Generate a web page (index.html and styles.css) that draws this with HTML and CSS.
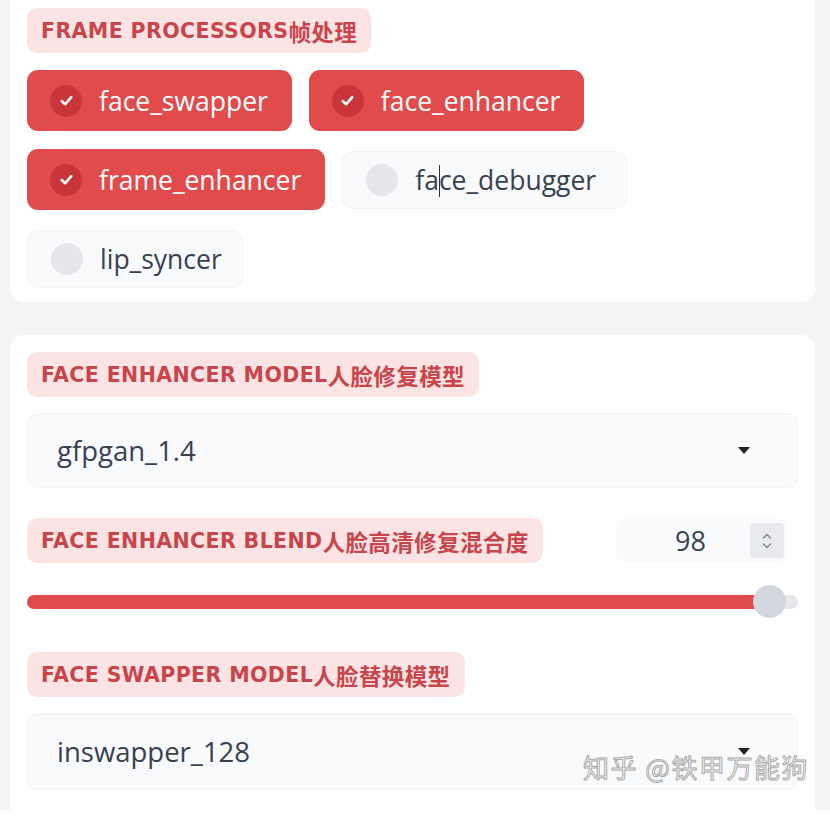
FILE: index.html
```html
<!DOCTYPE html>
<html>
<head>
<meta charset="utf-8">
<link rel="stylesheet" href="styles.css">
</head>
<body>
<div class="page">
  <section class="panel panel-top">
    <div class="label">FRAME PROCESSORS<span class="zh">帧处理</span></div>
    <div class="checks">
      <div class="chk on"><span class="dot"><svg viewBox="0 0 16 16" width="17" height="17"><path d="M3.5 8.5 L6.8 11.5 L12.5 4.8" fill="none" stroke="#fff" stroke-width="2.4" stroke-linecap="round" stroke-linejoin="round"/></svg></span><span class="txt">face_swapper</span></div>
      <div class="chk on"><span class="dot"><svg viewBox="0 0 16 16" width="17" height="17"><path d="M3.5 8.5 L6.8 11.5 L12.5 4.8" fill="none" stroke="#fff" stroke-width="2.4" stroke-linecap="round" stroke-linejoin="round"/></svg></span><span class="txt">face_enhancer</span></div>
      <div class="chk on"><span class="dot"><svg viewBox="0 0 16 16" width="17" height="17"><path d="M3.5 8.5 L6.8 11.5 L12.5 4.8" fill="none" stroke="#fff" stroke-width="2.4" stroke-linecap="round" stroke-linejoin="round"/></svg></span><span class="txt">frame_enhancer</span></div>
      <div class="chk off wide"><span class="dot"></span><span class="txt">fa<span class="caret-cursor"></span>ce_debugger</span></div>
      <div class="chk off"><span class="dot"></span><span class="txt">lip_syncer</span></div>
    </div>
  </section>
  <section class="panel panel-main">
    <div class="field">
      <div class="label">FACE ENHANCER MODEL<span class="zh">人脸修复模型</span></div>
      <div class="dropdown"><span>gfpgan_1.4</span><span class="tri"></span></div>
    </div>
    <div class="field blend">
      <div class="blend-head">
        <div class="label">FACE ENHANCER BLEND<span class="zh">人脸高清修复混合度</span></div>
        <div class="number"><span class="num">98</span><span class="spin"><svg viewBox="0 0 12 22" width="12" height="22"><path d="M2.5 8 L6 4.5 L9.5 8 M2.5 14 L6 17.5 L9.5 14" fill="none" stroke="#8a8f98" stroke-width="1.6" stroke-linecap="round" stroke-linejoin="round"/></svg></span></div>
      </div>
      <div class="slider"><div class="fill" style="width:96.2%"></div><div class="thumb"></div></div>
    </div>
    <div class="field swap">
      <div class="label">FACE SWAPPER MODEL<span class="zh">人脸替换模型</span></div>
      <div class="dropdown"><span>inswapper_128</span><span class="tri"></span></div>
    </div>
  </section>
  <div class="watermark">知乎 @铁甲万能狗</div>
</div>
</body>
</html>
```
FILE: styles.css
```css
html, body {
  margin: 0;
  padding: 0;
  background: #ffffff;
}
body {
  font-family: "Open Sans", "Noto Sans CJK SC", sans-serif;
  color: #374151;
}
.page {
  position: relative;
  height: 810px;
  background: #f3f4f6;
  padding: 0 15px 0 10px;
  display: flex;
  flex-direction: column;
  gap: 33px;
  overflow: hidden;
}
.panel {
  background: #ffffff;
}
.panel-top {
  border-radius: 0 0 14px 14px;
  padding: 8px 17px 15px;
  height: 279px;
}
.panel-main {
  border-radius: 14px 14px 0 0;
  padding: 17px 17px 0;
  flex: 1;
  display: flex;
  flex-direction: column;
}
.label {
  display: inline-flex;
  align-items: center;
  height: 45px;
  padding: 0 14px;
  background: #fde4e4;
  color: #c9444b;
  font-family: "DejaVu Sans", "Noto Sans CJK SC", sans-serif;
  font-weight: 700;
  font-size: 20.5px;
  letter-spacing: 0.4px;
  border-radius: 10px;
  align-self: flex-start;
  white-space: nowrap;
}
.label .zh {
  font-family: "Noto Sans CJK SC", sans-serif;
  font-size: 22.5px;
}
.checks {
  margin-top: 17px;
  display: flex;
  flex-wrap: wrap;
  gap: 18px 17px;
  width: 640px;
}
.chk {
  display: flex;
  align-items: center;
  height: 61px;
  box-sizing: border-box;
  padding: 0 24px 0 23px;
  border-radius: 11px;
  font-size: 26.5px;
  gap: 17px;
}
.chk .dot {
  width: 32px;
  height: 32px;
  border-radius: 50%;
  display: flex;
  align-items: center;
  justify-content: center;
  flex: none;
}
.chk.on {
  background: #e14b4b;
  color: #ffffff;
}
.chk.on .dot {
  background: #c8363b;
}
.chk.off {
  background: #f9fafb;
  color: #374151;
  height: 58px;
  margin-top: 2px;
  border: 1px solid #f3f4f6;
  padding-right: 20px;
}
.chk.off.wide {
  padding-right: 30px;
}
.chk.off .dot {
  background: #e5e7eb;
}
.caret-cursor {
  display: inline-block;
  width: 1.5px;
  height: 32px;
  background: #333;
  margin: 0 -1.5px 0 0;
  vertical-align: -7px;
}
.field {
  display: flex;
  flex-direction: column;
  gap: 16px;
}
.dropdown {
  height: 75px;
  border-radius: 11px;
  background: #f9fafb;
  border: 1px solid #f3f4f6;
  box-sizing: border-box;
  display: flex;
  align-items: center;
  justify-content: space-between;
  padding: 0 47px 0 29px;
  font-size: 27.5px;
  color: #374151;
}
.tri {
  width: 0;
  height: 0;
  border-left: 6px solid transparent;
  border-right: 6px solid transparent;
  border-top: 7px solid #222;
}
.blend {
  margin-top: 30px;
  gap: 32px;
}
.blend-head {
  display: flex;
  justify-content: space-between;
  align-items: center;
}
.number {
  width: 170px;
  height: 43px;
  margin-right: 12px;
  background: #f9fafb;
  border-radius: 8px;
  display: flex;
  align-items: center;
  justify-content: flex-end;
  gap: 44px;
  padding-right: 2px;
  box-sizing: border-box;
}
.num {
  font-size: 27px;
  color: #374151;
}
.spin {
  width: 34px;
  height: 35px;
  background: #e8eaed;
  border-radius: 4px;
  display: flex;
  align-items: center;
  justify-content: center;
}
.slider {
  position: relative;
  height: 14px;
  border-radius: 7px;
  background: #e5e7eb;
}
.slider .fill {
  height: 100%;
  background: #e04b4b;
  border-radius: 7px 0 0 7px;
}
.slider .thumb {
  position: absolute;
  left: calc(96.2% - 16px);
  top: -10px;
  width: 33px;
  height: 33px;
  border-radius: 50%;
  background: #d4d7dd;
}
.swap {
  margin-top: 43px;
}
.swap .dropdown {
  height: 77px;
}
.watermark {
  position: absolute;
  left: 583px;
  top: 748px;
  font-family: "Noto Sans CJK SC", sans-serif;
  font-size: 26px;
  color: rgba(255, 255, 255, 0.7);
  -webkit-text-stroke: 1px #a9a9a9;
  letter-spacing: 1.5px;
}
```
